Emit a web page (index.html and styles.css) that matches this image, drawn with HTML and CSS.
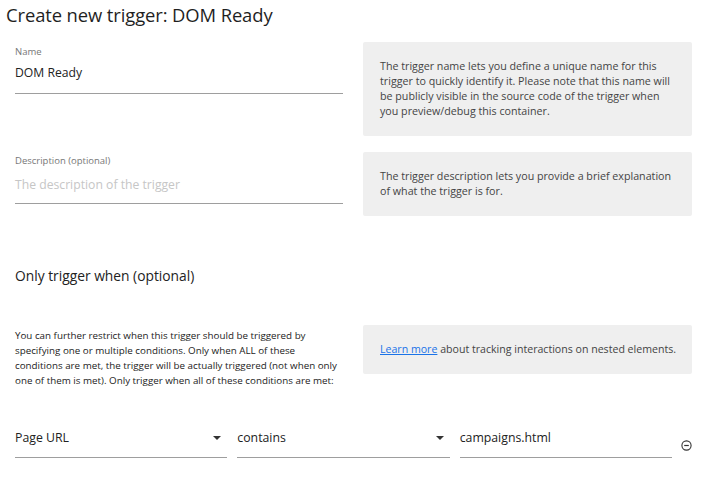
FILE: index.html
```html
<!DOCTYPE html>
<html lang="en">
<head>
<meta charset="utf-8">
<title>Create new trigger: DOM Ready</title>
<link rel="stylesheet" href="styles.css">
</head>
<body>
<h1 class="title">Create new trigger: DOM Ready</h1>

<div class="row row-first">
  <div class="field">
    <label class="field-label">Name</label>
    <div class="field-input">DOM Ready</div>
  </div>
  <div class="hint">The trigger name lets you define a unique name for this trigger to quickly identify it. Please note that this name will be publicly visible in the source code of the trigger when you preview/debug this container.</div>
</div>

<div class="row row-second">
  <div class="field field-desc">
    <label class="field-label">Description (optional)</label>
    <div class="field-input placeholder">The description of the trigger</div>
  </div>
  <div class="hint">The trigger description lets you provide a brief explanation of what the trigger is for.</div>
</div>

<h2 class="section-title">Only trigger when (optional)</h2>

<div class="row row-conditions">
  <p class="intro">You can further restrict when this trigger should be triggered by specifying one or multiple conditions. Only when ALL of these conditions are met, the trigger will be actually triggered (not when only one of them is met). Only trigger when all of these conditions are met:</p>
  <div class="hint hint-single"><a href="#" class="link">Learn more</a> about tracking interactions on nested elements.</div>
</div>

<div class="condition">
  <div class="select"><span>Page URL</span><span class="caret"></span></div>
  <div class="select"><span>contains</span><span class="caret"></span></div>
  <div class="select text-input"><span>campaigns.html</span></div>
  <button class="remove" aria-label="Remove condition">
    <svg width="11" height="11" viewBox="0 0 11 11"><circle cx="5.5" cy="5.5" r="4.6" fill="none" stroke="#333" stroke-width="1.1"/><line x1="3.2" y1="5.5" x2="7.8" y2="5.5" stroke="#333" stroke-width="1.2"/></svg>
  </button>
</div>
</body>
</html>
```

FILE: styles.css
```css
html, body {
  margin: 0;
  padding: 0;
  background: #ffffff;
}

body {
  font-family: "Open Sans", "Noto Sans", "Liberation Sans", sans-serif;
  color: #222222;
  width: 712px;
}

.title {
  margin: 0;
  padding: 3px 0 0 6px;
  font-size: 18.4px;
  line-height: 24px;
  font-weight: 400;
  color: #1f1f1f;
  letter-spacing: -0.1px;
}

.row {
  display: grid;
  grid-template-columns: 328px 329px;
  column-gap: 20px;
  padding: 0 20px 0 15px;
  align-items: start;
}

.row-first {
  margin-top: 15px;
}

.row-second {
  margin-top: 16px;
}

.field {
  padding-top: 3px;
}

.field-label {
  display: block;
  font-size: 9.5px;
  line-height: 14px;
  color: #777777;
}

.field-input {
  font-size: 12.2px;
  line-height: 18px;
  padding: 5px 0 11px;
  border-bottom: 1px solid #9e9e9e;
  color: #222222;
}

.field-desc {
  padding-top: 2px;
}

.field-desc .field-input {
  padding: 8px 0 9px;
}

.placeholder {
  color: #c6c6c6;
}

.hint {
  background: #efefef;
  border-radius: 2px;
  padding: 17px 17px;
  font-size: 10.7px;
  line-height: 15px;
  color: #444444;
}

.section-title {
  margin: 50px 0 0 15px;
  font-size: 13.8px;
  line-height: 20px;
  font-weight: 400;
  color: #222222;
}

.row-conditions {
  margin-top: 39px;
}

.intro {
  margin: 3px 0 0;
  font-size: 9.8px;
  line-height: 15px;
  color: #222222;
}

.hint-single {
  padding: 17px 8px 17px 17px;
  font-size: 10.6px;
  white-space: nowrap;
}

.link {
  color: #1a73e8;
  text-decoration: underline;
}

.condition {
  display: grid;
  grid-template-columns: 1fr 1fr 1fr 10px;
  column-gap: 10px;
  padding: 0 20px 0 15px;
  margin-top: 37px;
  align-items: center;
}

.select {
  display: flex;
  align-items: center;
  justify-content: space-between;
  font-size: 12.3px;
  line-height: 18px;
  padding: 4px 0 10px;
  border-bottom: 1px solid #9e9e9e;
  color: #222222;
}

.caret {
  width: 0;
  height: 0;
  border-left: 4px solid transparent;
  border-right: 4px solid transparent;
  border-top: 4px solid #333333;
  margin-right: 6px;
}

.remove {
  border: 0;
  background: none;
  padding: 0;
  margin: 8px 0 0 -1px;
  width: 11px;
  height: 11px;
  display: flex;
  cursor: pointer;
}
```
